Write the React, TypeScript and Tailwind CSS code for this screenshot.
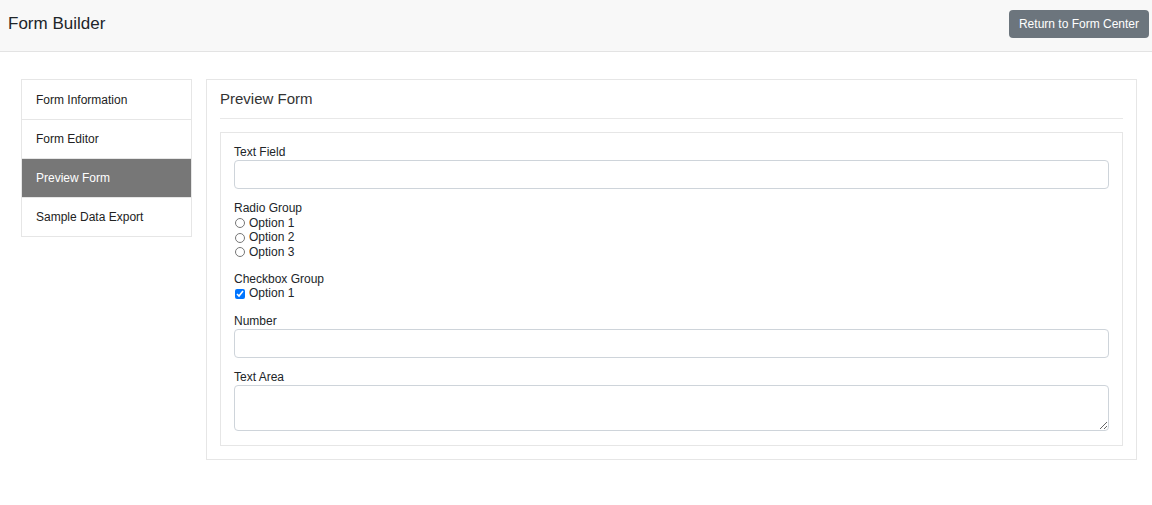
const navItems = ["Form Information", "Form Editor", "Preview Form", "Sample Data Export"];

const inputCls =
  "block w-full h-[29px] rounded-[4px] border border-[#ced4da] bg-white px-2 text-[12px] outline-none";

function Field({ label, children }: { label: string; children: React.ReactNode }) {
  return (
    <div className="mb-3">
      <label className="block text-[12px] leading-[15px] text-[#212529]">{label}</label>
      {children}
    </div>
  );
}

function Choice({ type, label, checked }: { type: "radio" | "checkbox"; label: string; checked?: boolean }) {
  return (
    <div className="flex items-center h-[14.5px] text-[12px] leading-[15px] text-[#212529]">
      <input
        type={type}
        name={type === "radio" ? "radio-group" : undefined}
        defaultChecked={checked}
        className="m-0 mr-[4px] ml-px h-[10px] w-[10px]"
      />
      <span>{label}</span>
    </div>
  );
}

export default function App() {
  return (
    <div className="min-h-screen bg-white font-['Liberation_Sans',Arial,sans-serif] text-[#212529]">
      {/* Header */}
      <header className="flex h-[52px] items-center justify-between border-b border-[#e3e3e3] bg-[#f8f8f8] pb-[4px] pl-2 pr-[3px]">
        <h1 className="text-[17px] text-[#212529]">Form Builder</h1>
        <button className="h-[28px] rounded-[4px] bg-[#6c757d] px-[10px] text-[12px] text-white">
          Return to Form Center
        </button>
      </header>

      <div className="flex items-start gap-[14px] pl-[21px] pr-[15px] pt-[27px]">
        {/* Sidebar */}
        <nav className="w-[171px] shrink-0 border border-[#e6e6e6]">
          {navItems.map((item, i) => (
            <div
              key={item}
              className={`flex h-[39px] items-center px-[14px] text-[12px] ${
                i > 0 ? "border-t border-[#e6e6e6]" : ""
              } ${item === "Preview Form" ? "bg-[#777777] text-white" : "text-[#222]"}`}
            >
              {item}
            </div>
          ))}
        </nav>

        {/* Main panel */}
        <section className="flex-1 border border-[#e6e6e6] px-[13px] pb-[13px]">
          <h2 className="flex h-[38px] items-center text-[15px] text-[#333]">Preview Form</h2>
          <hr className="border-t border-[#e8e8e8]" />
          <div className="mt-[13px] border border-[#e6e6e6] px-[13px] pt-[12px] pb-[2px]">
            <Field label="Text Field">
              <input type="text" className={inputCls} />
            </Field>
            <Field label="Radio Group">
              <Choice type="radio" label="Option 1" />
              <Choice type="radio" label="Option 2" />
              <Choice type="radio" label="Option 3" />
            </Field>
            <div className="mb-[13px]">
              <label className="block text-[12px] leading-[15px] text-[#212529]">Checkbox Group</label>
              <Choice type="checkbox" label="Option 1" checked />
            </div>
            <Field label="Number">
              <input type="number" className={inputCls} />
            </Field>
            <Field label="Text Area">
              <textarea className="block h-[46px] w-full rounded-[4px] border border-[#ced4da] bg-white px-2 text-[12px] outline-none" />
            </Field>
          </div>
        </section>
      </div>
    </div>
  );
}
